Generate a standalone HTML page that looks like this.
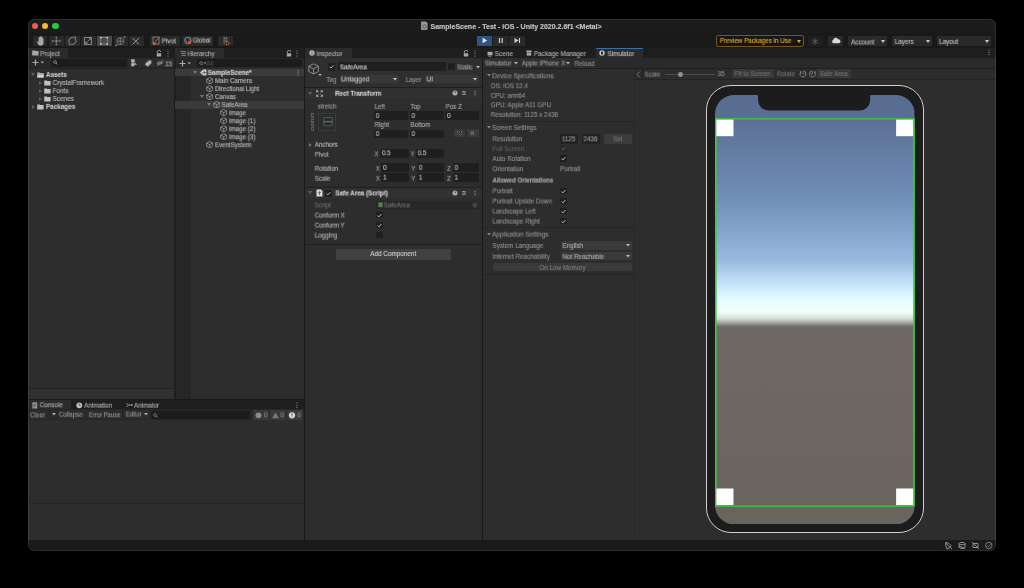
<!DOCTYPE html>
<html><head><meta charset="utf-8">
<style>
*{margin:0;padding:0;box-sizing:border-box}
html,body{width:1024px;height:588px;background:#000;overflow:hidden;font-family:"Liberation Sans",sans-serif;position:relative}
.a{position:absolute}
.t{position:absolute;white-space:nowrap;will-change:transform;transform-origin:0 0;-webkit-text-stroke:0.15px currentColor}
#root{position:absolute;left:0;top:0;width:1024px;height:588px}
</style></head><body><div id="root">
<div class="a" style="left:28px;top:19px;width:968px;height:531.5px;background:#191919;border-radius:6px"></div>
<div class="a" style="left:28px;top:19px;width:968px;height:14px;background:#1c1c1c;border-radius:6px 6px 0 0"></div>
<div class="a" style="left:32.0px;top:23.0px;width:6.40px;height:6.40px;background:#ee5e57;border-radius:3.2px;"></div>
<div class="a" style="left:42.099999999999994px;top:23.0px;width:6.40px;height:6.40px;background:#f8bb30;border-radius:3.2px;"></div>
<div class="a" style="left:52.199999999999996px;top:23.0px;width:6.40px;height:6.40px;background:#29c640;border-radius:3.2px;"></div>
<div class="t" style="left:430px;top:22px;font-size:7.00px;line-height:7.00px;color:#c2c2c2;transform:translate(0.50px,0.83px);font-weight:bold;">SampleScene - Test - iOS - Unity 2020.2.6f1 &lt;Metal&gt;</div>
<div class="a" style="left:421px;top:21.5px;width:6.40px;height:8.50px;background:#8a8a8a;border-radius:1px;"></div>
<div class="a" style="left:33px;top:36px;width:14.40px;height:9.70px;background:#2a2a2a;"></div>
<div class="a" style="left:48.9px;top:36px;width:14.90px;height:9.70px;background:#2a2a2a;"></div>
<div class="a" style="left:65.2px;top:36px;width:14.80px;height:9.70px;background:#2a2a2a;"></div>
<div class="a" style="left:81px;top:36px;width:15.00px;height:9.70px;background:#2a2a2a;"></div>
<div class="a" style="left:97.2px;top:36px;width:14.80px;height:9.70px;background:#2a2a2a;"></div>
<div class="a" style="left:113.5px;top:36px;width:14.50px;height:9.70px;background:#2a2a2a;"></div>
<div class="a" style="left:129px;top:36px;width:15.40px;height:9.70px;background:#2a2a2a;"></div>
<div class="a" style="left:97.2px;top:36px;width:14.80px;height:9.70px;background:#4a4a4a;"></div>
<div class="a" style="left:149.8px;top:36px;width:30.70px;height:9.70px;background:#2a2a2a;"></div>
<div class="a" style="left:182px;top:36px;width:31.00px;height:9.70px;background:#2a2a2a;"></div>
<div class="a" style="left:218px;top:36px;width:15.30px;height:9.70px;background:#2a2a2a;"></div>
<svg class="a" style="left:28px;top:33px" width="220" height="16" viewBox="0 0 220 16">
<g fill="#a8a8a8" stroke="none">
<path transform="translate(1.8 0)" d="M9.6 12.6 Q8.2 11.8 7.6 9.8 L7 8.3 Q7.6 7.9 8.2 8.6 L8.8 9.3 V4.4 Q9.3 3.9 9.8 4.4 V7.6 V3.8 Q10.3 3.3 10.8 3.8 V7.6 V3.6 Q11.3 3.1 11.8 3.6 V7.6 V4.1 Q12.3 3.6 12.8 4.1 V8.2 V5.6 Q13.3 5.2 13.7 5.6 V9.8 Q13.5 11.8 12.5 12.6 Z"/>
</g>
<g fill="#a0a0a0" stroke="#a0a0a0" stroke-width="0.6">
<path d="M28.3 4.5 V11.6 M24.6 8 H32" fill="none"/>
<path d="M28.3 3.6 l-1 1.2 h2z M28.3 12.5 l-1 -1.2 h2z M23.7 8 l1.2 -1 v2z M32.9 8 l-1.2 -1 v2z" stroke="none"/>
<circle cx="28.3" cy="8" r="0.6" stroke="none"/>
</g>
<g fill="none" stroke="#9a9a9a" stroke-width="0.8">
<circle cx="44.4" cy="7.9" r="3.5" stroke-dasharray="9.5 1.5" transform="rotate(-40 44.4 7.9)"/><path d="M46.2 3.6 l1.8 0.5 -0.6 1.7 M42.6 12.2 l-1.8 -0.5 0.6 -1.7" stroke-width="0.7"/></g>
<g fill="none" stroke="#9a9a9a" stroke-width="0.8">
<rect x="56.6" y="4.6" width="6.8" height="6.8"/><rect x="56.6" y="8.6" width="2.8" height="2.8" fill="#777" stroke="none"/><path d="M59.8 8.2 L62.8 5.2 M61 5 h1.9 v1.9" stroke-width="0.7"/>
</g>
<g fill="#c8c8c8">
<rect x="72.8" y="4.6" width="6.4" height="6.4" fill="none" stroke="#9a9a9a" stroke-width="0.6"/>
<rect x="72" y="3.8" width="1.6" height="1.6"/><rect x="78.4" y="3.8" width="1.6" height="1.6"/><rect x="72" y="10.2" width="1.6" height="1.6"/><rect x="78.4" y="10.2" width="1.6" height="1.6"/>
</g>
<g fill="none" stroke="#8e8e8e" stroke-width="0.7">
<circle cx="92.3" cy="8.2" r="3.4"/><path d="M92.3 4.8 V11.6 M88.9 8.2 H95.7"/>
<circle cx="96.5" cy="4" r="0.6" fill="#8e8e8e"/><circle cx="88.2" cy="12.3" r="0.6" fill="#8e8e8e"/>
</g>
<g fill="none" stroke="#9a9a9a" stroke-width="1">
<path d="M104.5 5 L111 11.5 M111 5 L104.5 11.5"/>
</g>
</svg>
<svg class="a" style="left:150px;top:35px" width="85" height="12" viewBox="0 0 85 12">
<rect x="3" y="2" width="6" height="7" fill="none" stroke="#9a9a9a" stroke-width="0.7"/><path d="M4 8 L9 2.6" stroke="#9a9a9a" stroke-width="0.7"/><circle cx="4.3" cy="8.6" r="1.5" fill="#d9582f"/>
<circle cx="37.8" cy="5.5" r="3.3" fill="none" stroke="#9a9a9a" stroke-width="0.8"/><path d="M35 4.4 Q37 5.4 36.8 8 M38.4 2.4 Q40 4.5 40.7 6.4" fill="none" stroke="#9a9a9a" stroke-width="0.6"/><circle cx="39.6" cy="7.4" r="1.6" fill="#d9582f"/>
<path d="M74.2 1.5 V9.5 M76.3 1.5 V9.5 M73.2 3.4 H77.8 M73.2 6 H77.8" stroke="#8a8a8a" stroke-width="0.6"/><path d="M76 6.6 h1.5 a1.5 1.5 0 0 1 0 3 h-1.5" fill="none" stroke="#d9582f" stroke-width="0.8"/>
</svg>
<div class="t" style="left:161px;top:38px;font-size:7.17px;line-height:7.17px;color:#bdbdbd;transform:translate(0.70px,0.35px) scaleX(0.8929);">Pivot</div>
<div class="t" style="left:192px;top:37px;font-size:6.83px;line-height:6.83px;color:#bdbdbd;transform:translate(0.70px,0.61px) scaleX(0.8929);">Global</div>
<div class="a" style="left:477.3px;top:36px;width:14.70px;height:9.80px;background:#2c5382;"></div>
<div class="a" style="left:493.1px;top:36px;width:15.00px;height:9.80px;background:#2a2a2a;"></div>
<div class="a" style="left:509px;top:36px;width:15.50px;height:9.80px;background:#2a2a2a;"></div>
<div class="a" style="left:715.8px;top:35.2px;width:88px;height:11.5px;border:0.8px solid #735817;border-radius:2px;background:#161616"></div>
<div class="t" style="left:719px;top:37px;font-size:7.08px;line-height:7.08px;color:#dca727;transform:translate(0.80px,0.89px) scaleX(0.8929);">Preview Packages in Use</div>
<div class="a" style="left:807.7px;top:36px;width:15.00px;height:9.70px;background:#202020;"></div>
<div class="a" style="left:827.9px;top:36px;width:14.90px;height:9.70px;background:#2a2a2a;"></div>
<div class="a" style="left:848.1px;top:36px;width:38.80px;height:9.50px;background:#2a2a2a;"></div>
<div class="a" style="left:892.3px;top:36px;width:39.60px;height:9.50px;background:#2a2a2a;"></div>
<div class="a" style="left:936.9px;top:36px;width:54.20px;height:9.50px;background:#2a2a2a;"></div>
<div class="t" style="left:851px;top:38px;font-size:7.25px;line-height:7.25px;color:#bdbdbd;transform:translate(0.00px,0.41px) scaleX(0.8929);">Account</div>
<div class="t" style="left:894px;top:37px;font-size:7.06px;line-height:7.06px;color:#bdbdbd;transform:translate(0.70px,0.90px) scaleX(0.8929);">Layers</div>
<div class="t" style="left:939px;top:37px;font-size:7.06px;line-height:7.06px;color:#bdbdbd;transform:translate(0.20px,0.90px) scaleX(0.8929);">Layout</div>
<div class="a" style="left:28px;top:48.2px;width:146.50px;height:340.30px;background:#1e1e1e;"></div>
<div class="a" style="left:28px;top:57.7px;width:146.50px;height:330.80px;background:#2d2d2d;"></div>
<div class="a" style="left:28px;top:48.2px;width:40.30px;height:9.50px;background:#2b2b2b;"></div>
<div class="t" style="left:40px;top:50px;font-size:7.02px;line-height:7.02px;color:#ababab;transform:translate(0.20px,0.12px) scaleX(0.8929);">Project</div>
<div class="a" style="left:28px;top:57.7px;width:146.50px;height:10.30px;background:#282828;"></div>
<div class="a" style="left:28px;top:67.8px;width:146.50px;height:0.80px;background:#242424;"></div>
<div class="a" style="left:51.1px;top:58.9px;width:75.80px;height:7.90px;background:#1c1c1c;border-radius:2px;"></div>
<div class="a" style="left:129px;top:58.5px;width:11.80px;height:8.50px;background:#2e2e2e;"></div>
<div class="a" style="left:142px;top:58.5px;width:12.00px;height:8.50px;background:#2e2e2e;"></div>
<div class="a" style="left:155.1px;top:58.5px;width:18.60px;height:8.50px;background:#2e2e2e;"></div>
<div class="t" style="left:45px;top:71px;font-size:7.13px;line-height:7.13px;color:#c8c8c8;transform:translate(0.90px,0.96px) scaleX(0.8929);font-weight:bold;">Assets</div>
<div class="t" style="left:52px;top:79px;font-size:7.11px;line-height:7.11px;color:#b4b4b4;transform:translate(0.60px,0.97px) scaleX(0.8929);">CrystalFramework</div>
<div class="t" style="left:52px;top:88px;font-size:7.11px;line-height:7.11px;color:#b4b4b4;transform:translate(0.60px,0.07px) scaleX(0.8929);">Fonts</div>
<div class="t" style="left:52px;top:95px;font-size:7.11px;line-height:7.11px;color:#b4b4b4;transform:translate(0.60px,0.97px) scaleX(0.8929);">Scenes</div>
<div class="t" style="left:45px;top:103px;font-size:7.13px;line-height:7.13px;color:#c8c8c8;transform:translate(0.90px,0.86px) scaleX(0.8929);font-weight:bold;">Packages</div>
<svg class="a" style="left:32px;top:50.20px" width="7" height="6" viewBox="0 0 7 6"><path d="M0.2 0.4 H2.6 L3.3 1.1 H6.6 V5.4 H0.2 Z" fill="#a8a8a8"/></svg>
<svg class="a" style="left:156.1px;top:49.70px" width="6" height="7" viewBox="0 0 6 7"><path d="M1.3 3.2 V2 a1.7 1.7 0 0 1 3.4 0" fill="none" stroke="#a8a8a8" stroke-width="0.8"/><rect x="0.8" y="3.3" width="4.4" height="3.2" fill="#a8a8a8"/></svg>
<svg class="a" style="left:167px;top:49.70px" width="2" height="7" viewBox="0 0 2 7"><circle cx="1" cy="1" r="0.6" fill="#a8a8a8"/><circle cx="1" cy="3.5" r="0.6" fill="#a8a8a8"/><circle cx="1" cy="6" r="0.6" fill="#a8a8a8"/></svg>
<svg class="a" style="left:31.5px;top:59.30px" width="13" height="7" viewBox="0 0 13 7"><path d="M3.5 0.5v6 M0.5 3.5h6" stroke="#a8a8a8" stroke-width="1.2"/><path d="M8.6 2.6h3.4l-1.7 2z" fill="#a8a8a8"/></svg>
<svg class="a" style="left:52.5px;top:60.30px" width="5" height="5" viewBox="0 0 5 5"><circle cx="2" cy="2" r="1.4" fill="none" stroke="#9a9a9a" stroke-width="0.7"/><path d="M3 3 L4.6 4.6" stroke="#9a9a9a" stroke-width="0.8"/></svg>
<svg class="a" style="left:129px;top:58px" width="45" height="10" viewBox="0 0 45 10"><rect x="2.2" y="1.3" width="3.4" height="3.2" rx="0.5" fill="#b4b4b4"/><circle cx="3.9" cy="6.6" r="1.9" fill="#b4b4b4"/><path d="M5.6 4 L8 7 L6 6.6z" fill="#b4b4b4"/><path d="M15.8 6.2 L19.6 2.6 H22.4 V5.2 L18.6 8.8 Z" fill="#b0b0b0"/><path d="M28.2 5 q2.6 -2.8 5.2 0 q-2.6 2.8 -5.2 0z" fill="none" stroke="#a0a0a0" stroke-width="0.8"/><path d="M28 7.8 L34.4 2.2" stroke="#a0a0a0" stroke-width="0.7"/></svg>
<div class="t" style="left:165px;top:60px;font-size:7.39px;line-height:7.39px;color:#a8a8a8;transform:translate(0.00px,0.24px) scaleX(0.8929);">15</div>
<svg class="a" style="left:31.2px;top:73.00px" width="4" height="3" viewBox="0 0 4 3"><path d="M0 0h4l-2 2.9z" fill="#5f5f5f"/></svg>
<svg class="a" style="left:37px;top:71.50px" width="7" height="6" viewBox="0 0 7 6"><path d="M0.2 0.4 H2.6 L3.3 1.1 H6.6 V5.4 H0.2 Z" fill="#c0c0c0"/><path d="M0.2 5.4 L1.4 2.2 H6.8 L6.6 5.4Z" fill="#d0d0d0"/><path d="M0.6 2 H6.4" stroke="#2d2d2d" stroke-width="0.4"/></svg>
<svg class="a" style="left:38.5px;top:80.60px" width="3" height="4" viewBox="0 0 3 4"><path d="M0 0v4l2.9-2z" fill="#5f5f5f"/></svg>
<svg class="a" style="left:44.1px;top:79.60px" width="7" height="6" viewBox="0 0 7 6"><path d="M0.2 0.4 H2.6 L3.3 1.1 H6.6 V5.4 H0.2 Z" fill="#c0c0c0"/></svg>
<svg class="a" style="left:38.5px;top:88.70px" width="3" height="4" viewBox="0 0 3 4"><path d="M0 0v4l2.9-2z" fill="#5f5f5f"/></svg>
<svg class="a" style="left:44.1px;top:87.70px" width="7" height="6" viewBox="0 0 7 6"><path d="M0.2 0.4 H2.6 L3.3 1.1 H6.6 V5.4 H0.2 Z" fill="#c0c0c0"/></svg>
<svg class="a" style="left:38.5px;top:96.60px" width="3" height="4" viewBox="0 0 3 4"><path d="M0 0v4l2.9-2z" fill="#5f5f5f"/></svg>
<svg class="a" style="left:44.1px;top:95.60px" width="7" height="6" viewBox="0 0 7 6"><path d="M0.2 0.4 H2.6 L3.3 1.1 H6.6 V5.4 H0.2 Z" fill="#c0c0c0"/></svg>
<svg class="a" style="left:31.5px;top:104.50px" width="3" height="4" viewBox="0 0 3 4"><path d="M0 0v4l2.9-2z" fill="#5f5f5f"/></svg>
<svg class="a" style="left:37px;top:103.50px" width="7" height="6" viewBox="0 0 7 6"><path d="M0.2 0.4 H2.6 L3.3 1.1 H6.6 V5.4 H0.2 Z" fill="#c0c0c0"/></svg>
<div class="a" style="left:28px;top:388.3px;width:146.30px;height:0.70px;background:#222222;"></div>
<div class="a" style="left:28px;top:389.3px;width:146.50px;height:9.40px;background:#303030;"></div>
<div class="a" style="left:175.2px;top:48.2px;width:128.60px;height:350.50px;background:#1e1e1e;"></div>
<div class="a" style="left:175.2px;top:57.7px;width:128.60px;height:341.00px;background:#2d2d2d;"></div>
<div class="a" style="left:175.2px;top:48.2px;width:48.60px;height:9.50px;background:#2b2b2b;"></div>
<div class="t" style="left:187px;top:50px;font-size:7.06px;line-height:7.06px;color:#ababab;transform:translate(0.50px,0.10px) scaleX(0.8929);">Hierarchy</div>
<div class="a" style="left:175.2px;top:57.7px;width:128.60px;height:10.80px;background:#282828;"></div>
<div class="a" style="left:197px;top:59.4px;width:105.40px;height:7.70px;background:#1c1c1c;border-radius:2px;"></div>
<div class="a" style="left:175.2px;top:76px;width:16.10px;height:322.70px;background:#262626;"></div>
<div class="a" style="left:174.1px;top:57.7px;width:1.80px;height:341.00px;background:#1e1e1e;"></div>
<div class="a" style="left:175.2px;top:68.9px;width:128.60px;height:7.10px;background:#3b3b3b;"></div>
<div class="t" style="left:207px;top:69px;font-size:7.11px;line-height:7.11px;color:#cfcfcf;transform:translate(0.70px,0.87px) scaleX(0.8929);font-weight:bold;">SampleScene*</div>
<div class="t" style="left:214px;top:78px;font-size:6.94px;line-height:6.94px;color:#b9b9b9;transform:translate(0.90px,0.05px) scaleX(0.8929);">Main Camera</div>
<div class="t" style="left:214px;top:86px;font-size:6.94px;line-height:6.94px;color:#b9b9b9;transform:translate(0.90px,0.07px) scaleX(0.8929);">Directional Light</div>
<div class="t" style="left:214px;top:94px;font-size:6.94px;line-height:6.94px;color:#b9b9b9;transform:translate(0.90px,0.09px) scaleX(0.8929);">Canvas</div>
<div class="a" style="left:175.2px;top:101px;width:128.60px;height:7.50px;background:#3a3a3a;"></div>
<div class="t" style="left:221px;top:102px;font-size:6.94px;line-height:6.94px;color:#b9b9b9;transform:translate(0.60px,0.11px) scaleX(0.8929);">SafeArea</div>
<div class="t" style="left:228px;top:110px;font-size:6.94px;line-height:6.94px;color:#b9b9b9;transform:translate(0.80px,0.13px) scaleX(0.8929);">Image</div>
<div class="t" style="left:228px;top:118px;font-size:6.94px;line-height:6.94px;color:#b9b9b9;transform:translate(0.80px,0.15px) scaleX(0.8929);">Image (1)</div>
<div class="t" style="left:228px;top:126px;font-size:6.94px;line-height:6.94px;color:#b9b9b9;transform:translate(0.80px,0.17px) scaleX(0.8929);">Image (2)</div>
<div class="t" style="left:228px;top:134px;font-size:6.94px;line-height:6.94px;color:#b9b9b9;transform:translate(0.80px,0.19px) scaleX(0.8929);">Image (3)</div>
<div class="t" style="left:214px;top:142px;font-size:6.94px;line-height:6.94px;color:#b9b9b9;transform:translate(0.90px,0.21px) scaleX(0.8929);">EventSystem</div>
<svg class="a" style="left:180px;top:50.5px" width="6" height="5" viewBox="0 0 6 5"><path d="M0.3 0.6h5.4 M1.5 2.5h4.2 M1.5 4.4h4.2" stroke="#a8a8a8" stroke-width="0.7"/></svg>
<svg class="a" style="left:286px;top:49.70px" width="6" height="7" viewBox="0 0 6 7"><path d="M1.3 3.2 V2 a1.7 1.7 0 0 1 3.4 0" fill="none" stroke="#a8a8a8" stroke-width="0.8"/><rect x="0.8" y="3.3" width="4.4" height="3.2" fill="#a8a8a8"/></svg>
<svg class="a" style="left:296.4px;top:49.70px" width="2" height="7" viewBox="0 0 2 7"><circle cx="1" cy="1" r="0.6" fill="#a8a8a8"/><circle cx="1" cy="3.5" r="0.6" fill="#a8a8a8"/><circle cx="1" cy="6" r="0.6" fill="#a8a8a8"/></svg>
<svg class="a" style="left:178.6px;top:59.50px" width="13" height="7" viewBox="0 0 13 7"><path d="M3.5 0.5v6 M0.5 3.5h6" stroke="#a8a8a8" stroke-width="1.2"/><path d="M8.6 2.6h3.4l-1.7 2z" fill="#a8a8a8"/></svg>
<svg class="a" style="left:198.5px;top:60.8px" width="8" height="5" viewBox="0 0 8 5"><circle cx="2" cy="2" r="1.4" fill="none" stroke="#8a8a8a" stroke-width="0.7"/><path d="M3 3 L4.5 4.5 M5 1.5 h2 l-1 1.3z" stroke="#8a8a8a" stroke-width="0.6" fill="#8a8a8a"/></svg>
<div class="t" style="left:206px;top:60px;font-size:6.94px;line-height:6.94px;color:#4e4e4e;transform:translate(0.50px,0.75px) scaleX(0.8929);">All</div>
<svg class="a" style="left:193px;top:71.10px" width="4" height="3" viewBox="0 0 4 3"><path d="M0 0h4l-2 2.9z" fill="#777"/></svg>
<svg class="a" style="left:198.5px;top:69px" width="8" height="7" viewBox="0 0 8 7"><path d="M1 3.5 L4.2 0.6 H7.4 V6.4 H4.2 Z" fill="#cfcfcf"/><path d="M3.2 3.5 H7.4 M5.2 1.6 V5.4" stroke="#3b3b3b" stroke-width="0.6"/></svg>
<svg class="a" style="left:296.5px;top:69.5px" width="2" height="6" viewBox="0 0 2 6"><circle cx="1" cy="0.8" r="0.55" fill="#aaa"/><circle cx="1" cy="3" r="0.55" fill="#aaa"/><circle cx="1" cy="5.2" r="0.55" fill="#aaa"/></svg>
<svg class="a" style="left:205.9px;top:76.90px" width="7.4" height="7.4" viewBox="0 0 7.4 7.4"><path d="M3.7 0.5 L6.7 2.1 V5.3 L3.7 6.9 L0.7 5.3 V2.1 Z M0.7 2.1 L3.7 3.7 L6.7 2.1 M3.7 3.7 V6.9" fill="none" stroke="#a8a8a8" stroke-width="0.7" stroke-linejoin="round"/></svg>
<svg class="a" style="left:205.9px;top:84.92px" width="7.4" height="7.4" viewBox="0 0 7.4 7.4"><path d="M3.7 0.5 L6.7 2.1 V5.3 L3.7 6.9 L0.7 5.3 V2.1 Z M0.7 2.1 L3.7 3.7 L6.7 2.1 M3.7 3.7 V6.9" fill="none" stroke="#a8a8a8" stroke-width="0.7" stroke-linejoin="round"/></svg>
<svg class="a" style="left:205.9px;top:92.94px" width="7.4" height="7.4" viewBox="0 0 7.4 7.4"><path d="M3.7 0.5 L6.7 2.1 V5.3 L3.7 6.9 L0.7 5.3 V2.1 Z M0.7 2.1 L3.7 3.7 L6.7 2.1 M3.7 3.7 V6.9" fill="none" stroke="#a8a8a8" stroke-width="0.7" stroke-linejoin="round"/></svg>
<svg class="a" style="left:200.2px;top:95.14px" width="4" height="3" viewBox="0 0 4 3"><path d="M0 0h4l-2 2.9z" fill="#777"/></svg>
<svg class="a" style="left:213px;top:100.96px" width="7.4" height="7.4" viewBox="0 0 7.4 7.4"><path d="M3.7 0.5 L6.7 2.1 V5.3 L3.7 6.9 L0.7 5.3 V2.1 Z M0.7 2.1 L3.7 3.7 L6.7 2.1 M3.7 3.7 V6.9" fill="none" stroke="#a8a8a8" stroke-width="0.7" stroke-linejoin="round"/></svg>
<svg class="a" style="left:207.4px;top:103.16px" width="4" height="3" viewBox="0 0 4 3"><path d="M0 0h4l-2 2.9z" fill="#777"/></svg>
<svg class="a" style="left:219.9px;top:108.98px" width="7.4" height="7.4" viewBox="0 0 7.4 7.4"><path d="M3.7 0.5 L6.7 2.1 V5.3 L3.7 6.9 L0.7 5.3 V2.1 Z M0.7 2.1 L3.7 3.7 L6.7 2.1 M3.7 3.7 V6.9" fill="none" stroke="#a8a8a8" stroke-width="0.7" stroke-linejoin="round"/></svg>
<svg class="a" style="left:219.9px;top:117.00px" width="7.4" height="7.4" viewBox="0 0 7.4 7.4"><path d="M3.7 0.5 L6.7 2.1 V5.3 L3.7 6.9 L0.7 5.3 V2.1 Z M0.7 2.1 L3.7 3.7 L6.7 2.1 M3.7 3.7 V6.9" fill="none" stroke="#a8a8a8" stroke-width="0.7" stroke-linejoin="round"/></svg>
<svg class="a" style="left:219.9px;top:125.02px" width="7.4" height="7.4" viewBox="0 0 7.4 7.4"><path d="M3.7 0.5 L6.7 2.1 V5.3 L3.7 6.9 L0.7 5.3 V2.1 Z M0.7 2.1 L3.7 3.7 L6.7 2.1 M3.7 3.7 V6.9" fill="none" stroke="#a8a8a8" stroke-width="0.7" stroke-linejoin="round"/></svg>
<svg class="a" style="left:219.9px;top:133.04px" width="7.4" height="7.4" viewBox="0 0 7.4 7.4"><path d="M3.7 0.5 L6.7 2.1 V5.3 L3.7 6.9 L0.7 5.3 V2.1 Z M0.7 2.1 L3.7 3.7 L6.7 2.1 M3.7 3.7 V6.9" fill="none" stroke="#a8a8a8" stroke-width="0.7" stroke-linejoin="round"/></svg>
<svg class="a" style="left:205.9px;top:141.06px" width="7.4" height="7.4" viewBox="0 0 7.4 7.4"><path d="M3.7 0.5 L6.7 2.1 V5.3 L3.7 6.9 L0.7 5.3 V2.1 Z M0.7 2.1 L3.7 3.7 L6.7 2.1 M3.7 3.7 V6.9" fill="none" stroke="#a8a8a8" stroke-width="0.7" stroke-linejoin="round"/></svg>
<div class="a" style="left:304.6px;top:48.2px;width:177.40px;height:491.60px;background:#1e1e1e;"></div>
<div class="a" style="left:304.6px;top:57.7px;width:177.40px;height:482.10px;background:#2d2d2d;"></div>
<div class="a" style="left:304.6px;top:48.2px;width:47.10px;height:9.50px;background:#2b2b2b;"></div>
<div class="t" style="left:316px;top:50px;font-size:7.06px;line-height:7.06px;color:#ababab;transform:translate(0.50px,0.10px) scaleX(0.8929);">Inspector</div>
<div class="a" style="left:483.0px;top:48.2px;width:513.00px;height:491.60px;background:#1e1e1e;"></div>
<div class="a" style="left:483.0px;top:57.7px;width:513.00px;height:482.10px;background:#2d2d2d;"></div>
<div class="a" style="left:595.6px;top:48.2px;width:47.00px;height:9.50px;background:#2b2b2b;"></div>
<div class="a" style="left:595.6px;top:48.2px;width:47.00px;height:0.80px;background:#3d6ea3;"></div>
<div class="t" style="left:494px;top:50px;font-size:7.19px;line-height:7.19px;color:#ababab;transform:translate(0.70px,0.03px) scaleX(0.8929);">Scene</div>
<div class="t" style="left:533px;top:50px;font-size:7.20px;line-height:7.20px;color:#ababab;transform:translate(0.80px,0.03px) scaleX(0.8929);">Package Manager</div>
<div class="t" style="left:607px;top:50px;font-size:7.06px;line-height:7.06px;color:#bdbdbd;transform:translate(0.50px,0.10px) scaleX(0.8929);">Simulator</div>
<div class="a" style="left:28px;top:399.6px;width:276.00px;height:140.20px;background:#1e1e1e;"></div>
<div class="a" style="left:28px;top:409.1px;width:276.00px;height:130.70px;background:#2d2d2d;"></div>
<div class="a" style="left:28px;top:399.6px;width:43.10px;height:9.80px;background:#2b2b2b;"></div>
<div class="t" style="left:39px;top:402px;font-size:7.08px;line-height:7.08px;color:#ababab;transform:translate(0.70px,0.19px) scaleX(0.8929);">Console</div>
<div class="t" style="left:84px;top:401px;font-size:7.06px;line-height:7.06px;color:#ababab;transform:translate(0.10px,0.70px) scaleX(0.8929);">Animation</div>
<div class="t" style="left:134px;top:401px;font-size:7.06px;line-height:7.06px;color:#ababab;transform:translate(0.00px,0.70px) scaleX(0.8929);">Animator</div>
<div class="a" style="left:304.6px;top:57.7px;width:177.40px;height:29.60px;background:#2f2f2f;"></div>
<div class="a" style="left:304.6px;top:87.3px;width:177.40px;height:0.60px;background:#1f1f1f;"></div>
<div class="a" style="left:304.6px;top:87.9px;width:177.40px;height:10.50px;background:#313131;"></div>
<svg class="a" style="left:308px;top:62.5px" width="14" height="14" viewBox="0 0 14 14"><path d="M5.6 0.8 L10.4 3.3 V8.5 L5.6 11 L0.8 8.5 V3.3 Z M0.8 3.3 L5.6 5.8 L10.4 3.3 M5.6 5.8 V11" fill="none" stroke="#9a9a9a" stroke-width="0.85" stroke-linejoin="round"/><path d="M10.3 11 h3.4 l-1.7 1.9z" fill="#b8b8b8"/></svg>
<div class="a" style="left:328px;top:63.2px;width:7.00px;height:7.40px;background:#1f1f1f;border-radius:1.2px;"></div>
<svg class="a" style="left:328px;top:63.2px" width="7" height="7.4" viewBox="0 0 7 7.4"><path d="M1.6 3.8 L2.9 5.1 L5.5 2.3" fill="none" stroke="#d0d0d0" stroke-width="0.9"/></svg>
<div class="a" style="left:338px;top:62.2px;width:108.10px;height:9.30px;background:#1f1f1f;border-radius:1.5px;"></div>
<div class="t" style="left:339px;top:63px;font-size:7.30px;line-height:7.30px;color:#d2d2d2;transform:translate(0.80px,0.38px) scaleX(0.8929);">SafeArea</div>
<div class="a" style="left:448.2px;top:63px;width:6.40px;height:7.40px;background:#1f1f1f;border-radius:1px;"></div>
<div class="t" style="left:457px;top:63px;font-size:7.06px;line-height:7.06px;color:#a0a0a0;transform:translate(0.00px,0.50px) scaleX(0.8929);">Static</div>
<svg class="a" style="left:475.5px;top:65.5px" width="4" height="3" viewBox="0 0 4 3"><path d="M0 0h4l-2 2.4z" fill="#b0b0b0"/></svg>
<div class="t" style="left:326px;top:75px;font-size:7.06px;line-height:7.06px;color:#8f8f8f;transform:translate(0.30px,1.00px) scaleX(0.8929);">Tag</div>
<div class="a" style="left:339.8px;top:75px;width:58.90px;height:7.90px;background:#383838;border-radius:1.5px;"></div>
<div class="t" style="left:341px;top:75px;font-size:7.26px;line-height:7.26px;color:#c0c0c0;transform:translate(0.00px,0.50px) scaleX(0.8929);">Untagged</div>
<svg class="a" style="left:393px;top:77.8px" width="4" height="3" viewBox="0 0 4 3"><path d="M0 0h4l-2 2.4z" fill="#c0c0c0"/></svg>
<div class="t" style="left:405px;top:75px;font-size:7.06px;line-height:7.06px;color:#8f8f8f;transform:translate(0.70px,1.00px) scaleX(0.8929);">Layer</div>
<div class="a" style="left:425px;top:75px;width:53.70px;height:7.90px;background:#383838;border-radius:1.5px;"></div>
<div class="t" style="left:426px;top:75px;font-size:7.26px;line-height:7.26px;color:#c0c0c0;transform:translate(0.50px,0.50px) scaleX(0.8929);">UI</div>
<svg class="a" style="left:472.5px;top:77.8px" width="4" height="3" viewBox="0 0 4 3"><path d="M0 0h4l-2 2.4z" fill="#c0c0c0"/></svg>
<svg class="a" style="left:308px;top:91.55px" width="4.5" height="3.5" viewBox="0 0 4.5 3.5"><path d="M0 0h4.4l-2.2 3.2z" fill="#5c5c5c"/></svg>
<div class="t" style="left:335px;top:89px;font-size:7.06px;line-height:7.06px;color:#cfcfcf;transform:translate(0.00px,0.75px) scaleX(0.8929);font-weight:bold;">Rect Transform</div>
<svg class="a" style="left:452px;top:90.15px" width="28" height="6" viewBox="0 0 28 6"><circle cx="3" cy="3" r="2.5" fill="#b0b0b0"/><path d="M2.2 2.2 q0.8 -1 1.6 0 q0 0.8 -0.8 1.1" stroke="#2f2f2f" stroke-width="0.7" fill="none"/><path d="M10 1.5h4 M10 3h4 M10 4.5h4 M11.5 1v1 M12.5 2.5v1 M11 4v1" stroke="#b0b0b0" stroke-width="0.6"/><circle cx="23" cy="1.2" r="0.55" fill="#b0b0b0"/><circle cx="23" cy="3" r="0.55" fill="#b0b0b0"/><circle cx="23" cy="4.8" r="0.55" fill="#b0b0b0"/></svg>
<svg class="a" style="left:315.5px;top:89.8px" width="7" height="7" viewBox="0 0 7 7"><g fill="#c0c0c0"><path d="M0.3 0.3 h2.4 L0.3 2.7z M6.7 0.3 h-2.4 L6.7 2.7z M0.3 6.7 h2.4 L0.3 4.3z M6.7 6.7 h-2.4 L6.7 4.3z"/></g><path d="M1.2 1.2 L2.6 2.6 M5.8 1.2 L4.4 2.6 M1.2 5.8 L2.6 4.4 M5.8 5.8 L4.4 4.4" stroke="#c0c0c0" stroke-width="0.7"/></svg>
<div class="t" style="left:317px;top:103px;font-size:6.61px;line-height:6.61px;color:#a0a0a0;transform:translate(0.80px,0.61px) scaleX(0.8929);letter-spacing:0.12px">stretch</div>
<svg class="a" style="left:309px;top:111px" width="8" height="22" viewBox="0 0 8 22"><text x="0" y="0" transform="translate(5.2 19.8) rotate(-90)" font-family="Liberation Sans" font-size="5.7" fill="#8a8a8a">custom</text></svg>
<div class="a" style="left:318.2px;top:112.8px;width:17.8px;height:17.9px;border:0.7px solid #3a3a3a"></div>
<svg class="a" style="left:322.5px;top:117px" width="10" height="9.5" viewBox="0 0 10 9.5"><rect x="0.75" y="0.65" width="8.6" height="8.2" fill="none" stroke="#5e5e5e" stroke-width="0.7"/><path d="M1.2 4.7 H8.9" stroke="#2d9bd2" stroke-width="0.9"/><path d="M1.1 3.7 L2.4 4.7 L1.1 5.7z M9 3.7 L7.7 4.7 L9 5.7z" fill="#2d9bd2"/></svg>
<div class="t" style="left:374px;top:103px;font-size:6.94px;line-height:6.94px;color:#a8a8a8;transform:translate(0.60px,0.85px) scaleX(0.8929);">Left</div>
<div class="t" style="left:410px;top:103px;font-size:6.94px;line-height:6.94px;color:#a8a8a8;transform:translate(0.50px,0.85px) scaleX(0.8929);">Top</div>
<div class="t" style="left:445px;top:103px;font-size:6.94px;line-height:6.94px;color:#a8a8a8;transform:translate(0.60px,0.85px) scaleX(0.8929);">Pos Z</div>
<div class="a" style="left:374px;top:111.4px;width:34.30px;height:8.40px;background:#1f1f1f;border-radius:1.5px;"></div>
<div class="t" style="left:375px;top:112px;font-size:6.94px;line-height:6.94px;color:#c0c0c0;transform:translate(0.80px,0.95px) scaleX(0.8929);">0</div>
<div class="a" style="left:409.8px;top:111.4px;width:34.20px;height:8.40px;background:#1f1f1f;border-radius:1.5px;"></div>
<div class="t" style="left:411px;top:112px;font-size:6.94px;line-height:6.94px;color:#c0c0c0;transform:translate(0.60px,0.95px) scaleX(0.8929);">0</div>
<div class="a" style="left:445.3px;top:111.4px;width:34.20px;height:8.40px;background:#1f1f1f;border-radius:1.5px;"></div>
<div class="t" style="left:447px;top:112px;font-size:6.94px;line-height:6.94px;color:#c0c0c0;transform:translate(0.10px,0.95px) scaleX(0.8929);">0</div>
<div class="t" style="left:374px;top:121px;font-size:6.94px;line-height:6.94px;color:#a8a8a8;transform:translate(0.60px,0.95px) scaleX(0.8929);">Right</div>
<div class="t" style="left:410px;top:121px;font-size:6.94px;line-height:6.94px;color:#a8a8a8;transform:translate(0.50px,0.95px) scaleX(0.8929);">Bottom</div>
<div class="a" style="left:374px;top:129.5px;width:34.30px;height:8.30px;background:#1f1f1f;border-radius:1.5px;"></div>
<div class="t" style="left:375px;top:131px;font-size:6.94px;line-height:6.94px;color:#c0c0c0;transform:translate(0.80px,0.05px) scaleX(0.8929);">0</div>
<div class="a" style="left:409.8px;top:129.5px;width:34.20px;height:8.30px;background:#1f1f1f;border-radius:1.5px;"></div>
<div class="t" style="left:411px;top:131px;font-size:6.94px;line-height:6.94px;color:#c0c0c0;transform:translate(0.60px,0.05px) scaleX(0.8929);">0</div>
<div class="a" style="left:454px;top:128.6px;width:11.10px;height:8.80px;background:#3a3a3a;border-radius:1px;"></div>
<div class="a" style="left:466.7px;top:128.6px;width:12.00px;height:8.80px;background:#3a3a3a;border-radius:1px;"></div>
<div class="a" style="left:457px;top:130.6px;width:5px;height:4.8px;border:0.6px dotted #666"></div>
<div class="t" style="left:470px;top:130px;font-size:6.16px;line-height:6.16px;color:#8a8a8a;transform:translate(0.50px,0.23px) scaleX(0.8929);">R</div>
<svg class="a" style="left:309px;top:142.5px" width="3" height="4" viewBox="0 0 3 4"><path d="M0 0v4l2.8-2z" fill="#777"/></svg>
<div class="t" style="left:314px;top:140px;font-size:7.06px;line-height:7.06px;color:#b9b9b9;transform:translate(0.70px,0.80px) scaleX(0.8929);">Anchors</div>
<div class="t" style="left:314px;top:150px;font-size:7.06px;line-height:7.06px;color:#b0b0b0;transform:translate(0.70px,0.80px) scaleX(0.8929);">Pivot</div>
<div class="t" style="left:374px;top:151px;font-size:6.50px;line-height:6.50px;color:#a0a0a0;transform:translate(0.50px,0.27px) scaleX(0.8929);">X</div>
<div class="a" style="left:379.9px;top:149.2px;width:28.80px;height:8.70px;background:#1f1f1f;border-radius:1.5px;"></div>
<div class="t" style="left:382px;top:150px;font-size:6.94px;line-height:6.94px;color:#c0c0c0;transform:translate(0.00px,0.25px) scaleX(0.8929);">0.5</div>
<div class="t" style="left:410px;top:151px;font-size:6.50px;line-height:6.50px;color:#a0a0a0;transform:translate(0.60px,0.27px) scaleX(0.8929);">Y</div>
<div class="a" style="left:416px;top:149.2px;width:28.10px;height:8.70px;background:#1f1f1f;border-radius:1.5px;"></div>
<div class="t" style="left:417px;top:150px;font-size:6.94px;line-height:6.94px;color:#c0c0c0;transform:translate(0.80px,0.25px) scaleX(0.8929);">0.5</div>
<div class="t" style="left:314px;top:164px;font-size:7.06px;line-height:7.06px;color:#b0b0b0;transform:translate(0.70px,0.80px) scaleX(0.8929);">Rotation</div>
<div class="t" style="left:375px;top:165px;font-size:6.50px;line-height:6.50px;color:#a0a0a0;transform:translate(0.90px,0.87px) scaleX(0.8929);">X</div>
<div class="a" style="left:381.3px;top:163px;width:27.40px;height:8.60px;background:#1f1f1f;border-radius:1.5px;"></div>
<div class="t" style="left:383px;top:164px;font-size:6.94px;line-height:6.94px;color:#c0c0c0;transform:translate(0.10px,0.85px) scaleX(0.8929);">0</div>
<div class="t" style="left:411px;top:165px;font-size:6.50px;line-height:6.50px;color:#a0a0a0;transform:translate(0.40px,0.87px) scaleX(0.8929);">Y</div>
<div class="a" style="left:417px;top:163px;width:27.00px;height:8.60px;background:#1f1f1f;border-radius:1.5px;"></div>
<div class="t" style="left:418px;top:164px;font-size:6.94px;line-height:6.94px;color:#c0c0c0;transform:translate(0.80px,0.85px) scaleX(0.8929);">0</div>
<div class="t" style="left:447px;top:165px;font-size:6.50px;line-height:6.50px;color:#a0a0a0;transform:translate(0.10px,0.87px) scaleX(0.8929);">Z</div>
<div class="a" style="left:452.7px;top:163px;width:26.30px;height:8.60px;background:#1f1f1f;border-radius:1.5px;"></div>
<div class="t" style="left:454px;top:164px;font-size:6.94px;line-height:6.94px;color:#c0c0c0;transform:translate(0.60px,0.85px) scaleX(0.8929);">0</div>
<div class="t" style="left:314px;top:174px;font-size:7.06px;line-height:7.06px;color:#b0b0b0;transform:translate(0.70px,0.70px) scaleX(0.8929);">Scale</div>
<div class="t" style="left:375px;top:175px;font-size:6.50px;line-height:6.50px;color:#a0a0a0;transform:translate(0.90px,0.77px) scaleX(0.8929);">X</div>
<div class="a" style="left:381.3px;top:173.1px;width:27.40px;height:8.90px;background:#1f1f1f;border-radius:1.5px;"></div>
<div class="t" style="left:383px;top:174px;font-size:6.94px;line-height:6.94px;color:#c0c0c0;transform:translate(0.10px,0.75px) scaleX(0.8929);">1</div>
<div class="t" style="left:411px;top:175px;font-size:6.50px;line-height:6.50px;color:#a0a0a0;transform:translate(0.40px,0.77px) scaleX(0.8929);">Y</div>
<div class="a" style="left:417px;top:173.1px;width:27.00px;height:8.90px;background:#1f1f1f;border-radius:1.5px;"></div>
<div class="t" style="left:418px;top:174px;font-size:6.94px;line-height:6.94px;color:#c0c0c0;transform:translate(0.80px,0.75px) scaleX(0.8929);">1</div>
<div class="t" style="left:447px;top:175px;font-size:6.50px;line-height:6.50px;color:#a0a0a0;transform:translate(0.10px,0.77px) scaleX(0.8929);">Z</div>
<div class="a" style="left:452.7px;top:173.1px;width:26.30px;height:8.90px;background:#1f1f1f;border-radius:1.5px;"></div>
<div class="t" style="left:454px;top:174px;font-size:6.94px;line-height:6.94px;color:#c0c0c0;transform:translate(0.60px,0.75px) scaleX(0.8929);">1</div>
<div class="a" style="left:304.6px;top:186.8px;width:177.40px;height:0.70px;background:#1f1f1f;"></div>
<div class="a" style="left:304.6px;top:187.5px;width:177.40px;height:10.60px;background:#313131;"></div>
<svg class="a" style="left:308px;top:191.20px" width="4.5" height="3.5" viewBox="0 0 4.5 3.5"><path d="M0 0h4.4l-2.2 3.2z" fill="#5c5c5c"/></svg>
<div class="t" style="left:335px;top:189px;font-size:7.06px;line-height:7.06px;color:#cfcfcf;transform:translate(0.40px,0.40px) scaleX(0.8929);font-weight:bold;">Safe Area (Script)</div>
<svg class="a" style="left:452px;top:189.80px" width="28" height="6" viewBox="0 0 28 6"><circle cx="3" cy="3" r="2.5" fill="#b0b0b0"/><path d="M2.2 2.2 q0.8 -1 1.6 0 q0 0.8 -0.8 1.1" stroke="#2f2f2f" stroke-width="0.7" fill="none"/><path d="M10 1.5h4 M10 3h4 M10 4.5h4 M11.5 1v1 M12.5 2.5v1 M11 4v1" stroke="#b0b0b0" stroke-width="0.6"/><circle cx="23" cy="1.2" r="0.55" fill="#b0b0b0"/><circle cx="23" cy="3" r="0.55" fill="#b0b0b0"/><circle cx="23" cy="4.8" r="0.55" fill="#b0b0b0"/></svg>
<svg class="a" style="left:315.8px;top:188.8px" width="7" height="8" viewBox="0 0 7 8"><path d="M0.5 0.5h4.5l1.5 1.5v5.5h-6z" fill="#d8d8d8"/><path d="M3.5 2l-1.7 2h1.2v2h1v-2h1.2z" fill="#3d8a4a"/></svg>
<div class="a" style="left:325.2px;top:190.3px;width:6.70px;height:6.70px;background:#1f1f1f;border-radius:1.2px;"></div>
<svg class="a" style="left:325.2px;top:190.3px" width="7" height="7" viewBox="0 0 7 7"><path d="M1.5 3.6 L2.8 4.9 L5.4 2.1" fill="none" stroke="#d0d0d0" stroke-width="0.9"/></svg>
<div class="t" style="left:314px;top:201px;font-size:7.06px;line-height:7.06px;color:#6a6a6a;transform:translate(0.70px,0.40px) scaleX(0.8929);">Script</div>
<div class="a" style="left:375.8px;top:201px;width:103.70px;height:7.70px;background:#272727;border-radius:1.5px;"></div>
<svg class="a" style="left:377.5px;top:202.3px" width="5" height="5.5" viewBox="0 0 5 5.5"><rect x="0.3" y="0.3" width="4.4" height="4.9" fill="#5a7a5e"/></svg>
<div class="t" style="left:383px;top:201px;font-size:7.06px;line-height:7.06px;color:#6f6f6f;transform:translate(0.70px,0.40px) scaleX(0.8929);">SafeArea</div>
<svg class="a" style="left:471.5px;top:201.8px" width="6" height="6" viewBox="0 0 6 6"><circle cx="3" cy="3" r="2.3" fill="none" stroke="#666" stroke-width="0.6"/><circle cx="3" cy="3" r="1" fill="#666"/></svg>
<div class="t" style="left:314px;top:211px;font-size:7.06px;line-height:7.06px;color:#b0b0b0;transform:translate(0.70px,0.60px) scaleX(0.8929);">Conform X</div>
<div class="a" style="left:375.5px;top:211.7px;width:7.00px;height:6.80px;background:#1f1f1f;border-radius:1.2px;"></div>
<svg class="a" style="left:375.5px;top:211.70px" width="7" height="7" viewBox="0 0 7 7"><path d="M1.5 3.6 L2.8 4.9 L5.4 2.1" fill="none" stroke="#d8d8d8" stroke-width="0.9"/></svg>
<div class="t" style="left:314px;top:221px;font-size:7.06px;line-height:7.06px;color:#b0b0b0;transform:translate(0.70px,0.60px) scaleX(0.8929);">Conform Y</div>
<div class="a" style="left:375.5px;top:221.7px;width:7.00px;height:6.80px;background:#1f1f1f;border-radius:1.2px;"></div>
<svg class="a" style="left:375.5px;top:221.70px" width="7" height="7" viewBox="0 0 7 7"><path d="M1.5 3.6 L2.8 4.9 L5.4 2.1" fill="none" stroke="#d8d8d8" stroke-width="0.9"/></svg>
<div class="t" style="left:314px;top:231px;font-size:7.06px;line-height:7.06px;color:#b0b0b0;transform:translate(0.70px,0.60px) scaleX(0.8929);">Logging</div>
<div class="a" style="left:375.5px;top:231.7px;width:7.00px;height:6.80px;background:#1f1f1f;border-radius:1.2px;"></div>
<div class="a" style="left:304.6px;top:243.6px;width:177.40px;height:0.70px;background:#1f1f1f;"></div>
<div class="a" style="left:336px;top:249px;width:114.50px;height:10.50px;background:#414141;border-radius:1.5px;"></div>
<div class="t" style="left:336px;top:250.7px;width:114.5px;text-align:center;font-size:6.35px;line-height:6.35px;color:#c4c4c4">Add Component</div>
<div class="a" style="left:483.0px;top:57.7px;width:513.00px;height:10.70px;background:#2a2a2a;"></div>
<div class="a" style="left:483px;top:58.3px;width:35.80px;height:9.50px;background:#2f2f2f;"></div>
<div class="a" style="left:520.2px;top:58.3px;width:51.30px;height:9.50px;background:#2f2f2f;"></div>
<div class="a" style="left:572.9px;top:58.3px;width:23.30px;height:9.50px;background:#2f2f2f;"></div>
<div class="t" style="left:484px;top:59px;font-size:7.06px;line-height:7.06px;color:#9a9a9a;transform:translate(0.80px,0.50px) scaleX(0.8929);">Simulator</div>
<svg class="a" style="left:513.5px;top:61.8px" width="4" height="3" viewBox="0 0 4 3"><path d="M0 0h4l-2 2.4z" fill="#b0b0b0"/></svg>
<div class="t" style="left:521px;top:59px;font-size:7.06px;line-height:7.06px;color:#9a9a9a;transform:translate(0.80px,0.50px) scaleX(0.8929);">Apple iPhone X</div>
<svg class="a" style="left:566px;top:61.8px" width="4" height="3" viewBox="0 0 4 3"><path d="M0 0h4l-2 2.4z" fill="#b0b0b0"/></svg>
<div class="t" style="left:574px;top:59px;font-size:7.06px;line-height:7.06px;color:#8a8a8a;transform:translate(0.50px,0.90px) scaleX(0.8929);">Reload</div>
<div class="a" style="left:483.0px;top:68.4px;width:513.00px;height:0.50px;background:#1f1f1f;"></div>
<div class="a" style="left:633.8px;top:68.9px;width:0.70px;height:470.90px;background:#282828;"></div>
<svg class="a" style="left:486.5px;top:74.10px" width="4" height="3" viewBox="0 0 4 3"><path d="M0 0h4l-2 2.6z" fill="#888"/></svg>
<div class="t" style="left:492px;top:72px;font-size:7.27px;line-height:7.27px;color:#8e8e8e;transform:translate(0.00px,0.25px) scaleX(0.8929);">Device Specifications</div>
<div class="t" style="left:490px;top:82px;font-size:7.06px;line-height:7.06px;color:#8e8e8e;transform:translate(0.75px,0.20px) scaleX(0.8929);">OS: iOS 12.4</div>
<div class="t" style="left:490px;top:91px;font-size:7.06px;line-height:7.06px;color:#8e8e8e;transform:translate(0.75px,0.90px) scaleX(0.8929);">CPU: arm64</div>
<div class="t" style="left:490px;top:101px;font-size:7.06px;line-height:7.06px;color:#8e8e8e;transform:translate(0.75px,0.25px) scaleX(0.8929);">GPU: Apple A11 GPU</div>
<div class="t" style="left:490px;top:110px;font-size:7.06px;line-height:7.06px;color:#8e8e8e;transform:translate(0.75px,0.90px) scaleX(0.8929);">Resolution: 1125 x 2436</div>
<div class="a" style="left:483.0px;top:120.5px;width:150.70px;height:0.60px;background:#262626;"></div>
<svg class="a" style="left:486.5px;top:125.70px" width="4" height="3" viewBox="0 0 4 3"><path d="M0 0h4l-2 2.6z" fill="#888"/></svg>
<div class="t" style="left:492px;top:123px;font-size:7.06px;line-height:7.06px;color:#8e8e8e;transform:translate(0.00px,0.90px) scaleX(0.8929);">Screen Settings</div>
<div class="t" style="left:492px;top:135px;font-size:7.06px;line-height:7.06px;color:#8e8e8e;transform:translate(0.50px,0.25px) scaleX(0.8929);">Resolution</div>
<div class="a" style="left:560px;top:133.6px;width:18.30px;height:10.20px;background:#222222;border-radius:1.5px;"></div>
<div class="t" style="left:561px;top:135px;font-size:7.06px;line-height:7.06px;color:#9c9c9c;transform:translate(0.80px,0.30px) scaleX(0.8929);">1125</div>
<div class="a" style="left:581.7px;top:133.6px;width:18.30px;height:10.20px;background:#222222;border-radius:1.5px;"></div>
<div class="t" style="left:583px;top:135px;font-size:7.06px;line-height:7.06px;color:#9c9c9c;transform:translate(0.50px,0.30px) scaleX(0.8929);">2436</div>
<div class="a" style="left:603.8px;top:133.6px;width:28.10px;height:10.20px;background:#3c3c3c;border-radius:1.5px;"></div>
<div class="t" style="left:613px;top:135px;font-size:7.06px;line-height:7.06px;color:#777;transform:translate(0.00px,0.30px) scaleX(0.8929);">Set</div>
<div class="t" style="left:492px;top:145px;font-size:7.06px;line-height:7.06px;color:#5e5e5e;transform:translate(0.50px,0.10px) scaleX(0.8929);">Full Screen</div>
<div class="a" style="left:560px;top:145.3px;width:6.70px;height:6.60px;background:#282828;border-radius:1.2px;"></div>
<svg class="a" style="left:560px;top:145.30px" width="7" height="7" viewBox="0 0 7 7"><path d="M1.5 3.6 L2.8 4.9 L5.4 2.1" fill="none" stroke="#666" stroke-width="0.9"/></svg>
<div class="t" style="left:492px;top:154px;font-size:7.06px;line-height:7.06px;color:#8e8e8e;transform:translate(0.50px,1.00px) scaleX(0.8929);">Auto Rotation</div>
<div class="a" style="left:560px;top:155.20000000000002px;width:6.70px;height:6.60px;background:#1f1f1f;border-radius:1.2px;"></div>
<svg class="a" style="left:560px;top:155.20px" width="7" height="7" viewBox="0 0 7 7"><path d="M1.5 3.6 L2.8 4.9 L5.4 2.1" fill="none" stroke="#d8d8d8" stroke-width="0.9"/></svg>
<div class="t" style="left:492px;top:165px;font-size:7.06px;line-height:7.06px;color:#8e8e8e;transform:translate(0.50px,0.20px) scaleX(0.8929);">Orientation</div>
<div class="t" style="left:560px;top:165px;font-size:7.06px;line-height:7.06px;color:#8e8e8e;transform:translate(0.00px,0.20px) scaleX(0.8929);">Portrait</div>
<div class="t" style="left:492px;top:177px;font-size:6.81px;line-height:6.81px;color:#a8a8a8;transform:translate(0.50px,0.52px) scaleX(0.8929);font-weight:bold;">Allowed Orientations</div>
<div class="t" style="left:492px;top:187px;font-size:7.06px;line-height:7.06px;color:#8e8e8e;transform:translate(0.50px,0.30px) scaleX(0.8929);">Portrait</div>
<div class="a" style="left:560px;top:187.5px;width:6.70px;height:6.60px;background:#1f1f1f;border-radius:1.2px;"></div>
<svg class="a" style="left:560px;top:187.50px" width="7" height="7" viewBox="0 0 7 7"><path d="M1.5 3.6 L2.8 4.9 L5.4 2.1" fill="none" stroke="#d8d8d8" stroke-width="0.9"/></svg>
<div class="t" style="left:492px;top:197px;font-size:7.06px;line-height:7.06px;color:#8e8e8e;transform:translate(0.50px,0.50px) scaleX(0.8929);">Portrait Upside Down</div>
<div class="a" style="left:560px;top:197.70000000000002px;width:6.70px;height:6.60px;background:#1f1f1f;border-radius:1.2px;"></div>
<svg class="a" style="left:560px;top:197.70px" width="7" height="7" viewBox="0 0 7 7"><path d="M1.5 3.6 L2.8 4.9 L5.4 2.1" fill="none" stroke="#d8d8d8" stroke-width="0.9"/></svg>
<div class="t" style="left:492px;top:207px;font-size:7.06px;line-height:7.06px;color:#8e8e8e;transform:translate(0.50px,0.60px) scaleX(0.8929);">Landscape Left</div>
<div class="a" style="left:560px;top:207.8px;width:6.70px;height:6.60px;background:#1f1f1f;border-radius:1.2px;"></div>
<svg class="a" style="left:560px;top:207.80px" width="7" height="7" viewBox="0 0 7 7"><path d="M1.5 3.6 L2.8 4.9 L5.4 2.1" fill="none" stroke="#d8d8d8" stroke-width="0.9"/></svg>
<div class="t" style="left:492px;top:217px;font-size:7.06px;line-height:7.06px;color:#8e8e8e;transform:translate(0.50px,0.60px) scaleX(0.8929);">Landscape Right</div>
<div class="a" style="left:560px;top:217.8px;width:6.70px;height:6.60px;background:#1f1f1f;border-radius:1.2px;"></div>
<svg class="a" style="left:560px;top:217.80px" width="7" height="7" viewBox="0 0 7 7"><path d="M1.5 3.6 L2.8 4.9 L5.4 2.1" fill="none" stroke="#d8d8d8" stroke-width="0.9"/></svg>
<div class="a" style="left:483.0px;top:227.3px;width:150.70px;height:0.60px;background:#262626;"></div>
<svg class="a" style="left:487px;top:232.50px" width="4" height="3" viewBox="0 0 4 3"><path d="M0 0h4l-2 2.6z" fill="#888"/></svg>
<div class="t" style="left:492px;top:230px;font-size:7.20px;line-height:7.20px;color:#8e8e8e;transform:translate(0.10px,0.63px) scaleX(0.8929);">Application Settings</div>
<div class="t" style="left:492px;top:241px;font-size:7.06px;line-height:7.06px;color:#8e8e8e;transform:translate(0.50px,0.90px) scaleX(0.8929);">System Language</div>
<div class="a" style="left:560.7px;top:241.1px;width:70.90px;height:8.50px;background:#3a3a3a;border-radius:1.5px;"></div>
<div class="t" style="left:562px;top:241px;font-size:7.06px;line-height:7.06px;color:#a8a8a8;transform:translate(0.50px,0.90px) scaleX(0.8929);">English</div>
<svg class="a" style="left:626px;top:243.80px" width="4" height="3" viewBox="0 0 4 3"><path d="M0 0h4l-2 2.6z" fill="#bbb"/></svg>
<div class="t" style="left:492px;top:252px;font-size:7.06px;line-height:7.06px;color:#8e8e8e;transform:translate(0.50px,0.80px) scaleX(0.8929);">Internet Reachability</div>
<div class="a" style="left:560.7px;top:252.4px;width:70.90px;height:8.00px;background:#3a3a3a;border-radius:1.5px;"></div>
<div class="t" style="left:562px;top:252px;font-size:7.06px;line-height:7.06px;color:#a8a8a8;transform:translate(0.50px,0.90px) scaleX(0.8929);">Not Reachable</div>
<svg class="a" style="left:626px;top:254.80px" width="4" height="3" viewBox="0 0 4 3"><path d="M0 0h4l-2 2.6z" fill="#bbb"/></svg>
<div class="a" style="left:492.6px;top:263.2px;width:139.00px;height:8.30px;background:#3a3a3a;border-radius:1.5px;"></div>
<div class="t" style="left:492.6px;top:264.5px;width:139px;text-align:center;font-size:6.3px;line-height:6.3px;color:#777">On Low Memory</div>
<div class="a" style="left:483.0px;top:274px;width:150.70px;height:0.60px;background:#262626;"></div>
<div class="a" style="left:634.5px;top:68.9px;width:361.50px;height:10.20px;background:#2c2c2c;"></div>
<div class="a" style="left:634.5px;top:79.1px;width:361.50px;height:0.60px;background:#232323;"></div>
<svg class="a" style="left:636px;top:70.5px" width="5" height="7" viewBox="0 0 5 7"><path d="M3.8 0.6 L1 3.5 L3.8 6.4" fill="none" stroke="#888" stroke-width="0.8"/></svg>
<div class="a" style="left:642px;top:69px;width:0.60px;height:10.00px;background:#1f1f1f;"></div>
<div class="t" style="left:644px;top:70px;font-size:7.02px;line-height:7.02px;color:#8a8a8a;transform:translate(0.60px,0.62px) scaleX(0.8929);">Scale</div>
<div class="a" style="left:665.4px;top:73.8px;width:49.40px;height:0.70px;background:#4a4a4a;"></div>
<div class="a" style="left:678px;top:72px;width:4.6px;height:4.6px;border-radius:50%;background:#8e8e8e"></div>
<div class="t" style="left:717px;top:71px;font-size:7.17px;line-height:7.17px;color:#8a8a8a;transform:translate(0.60px,0.15px) scaleX(0.8929);">35</div>
<div class="a" style="left:731.8px;top:69.4px;width:41.90px;height:9.10px;background:#383838;"></div>
<div class="t" style="left:734px;top:71px;font-size:7.09px;line-height:7.09px;color:#727272;transform:translate(0.60px,0.08px) scaleX(0.8929);">Fit to Screen</div>
<div class="t" style="left:776px;top:71px;font-size:6.88px;line-height:6.88px;color:#727272;transform:translate(0.90px,0.19px) scaleX(0.8929);">Rotate</div>
<svg class="a" style="left:798.5px;top:70px" width="18" height="8" viewBox="0 0 18 8"><g fill="none" stroke="#9a9a9a" stroke-width="0.75"><path d="M4 1.1 A2.9 2.9 0 1 1 1.3 3"/><path d="M13.5 1.1 A2.9 2.9 0 1 0 16.2 3"/><path d="M4 4 L5.6 4 M4 4 L4 2.4" stroke-width="0.6"/><path d="M13.5 4 L11.9 4 M13.5 4 L13.5 2.4" stroke-width="0.6"/></g><path d="M0.6 1.5 L2.8 1.5 L1.7 3.6z M16.9 1.5 L14.7 1.5 L15.8 3.6z" fill="#9a9a9a"/></svg>
<div class="a" style="left:816.9px;top:69.4px;width:34.00px;height:9.10px;background:#383838;"></div>
<div class="t" style="left:819px;top:71px;font-size:7.11px;line-height:7.11px;color:#727272;transform:translate(0.70px,0.07px) scaleX(0.8929);">Safe Area</div>
<div class="a" style="left:706.2px;top:85.2px;width:217.4px;height:448.3px;border-radius:25px;background:#1c1c1c;border:1px solid #d0d0d0"></div>
<svg class="a" style="left:714.8px;top:94.8px" width="199.8" height="429.4" viewBox="0 0 199 429.4" preserveAspectRatio="none">
<defs>
<linearGradient id="sky" x1="0" y1="0" x2="0" y2="1">
<stop offset="0" stop-color="#586c90"/>
<stop offset="0.054" stop-color="#5b6f94"/>
<stop offset="0.245" stop-color="#7190b8"/>
<stop offset="0.385" stop-color="#9ab9df"/>
<stop offset="0.443" stop-color="#c5e6fb"/>
<stop offset="0.478" stop-color="#e5fdff"/>
<stop offset="0.505" stop-color="#f2fff8"/>
<stop offset="0.521" stop-color="#d3ded5"/>
<stop offset="0.530" stop-color="#a3a8a3"/>
<stop offset="0.540" stop-color="#6e6965"/>
<stop offset="1" stop-color="#6a645f"/>
</linearGradient>
<clipPath id="scr"><path d="M0 19 A19 19 0 0 1 19 0 H41.4 Q42.9 0 42.9 1.5 V5.4 A10 10 0 0 0 52.9 15.4 H144.5 A10 10 0 0 0 154.5 5.4 V1.5 Q154.5 0 156 0 H180 A19 19 0 0 1 199 19 V410.4 A19 19 0 0 1 180 429.4 H19 A19 19 0 0 1 0 410.4 Z"/></clipPath>
</defs>
<rect width="199" height="429.4" fill="url(#sky)" clip-path="url(#scr)"/>
<path d="M0 23.2 H199 V411.8 H0 Z M1.6 24.5 V410.4 H197.4 V24.5 Z" fill="#3ccc3c" fill-rule="evenodd"/>
<rect x="1.4" y="24.6" width="17" height="16.6" fill="#fff"/>
<rect x="180.4" y="24.6" width="17" height="16.6" fill="#fff"/>
<rect x="1.4" y="393.5" width="17" height="16.6" fill="#fff"/>
<rect x="180.4" y="393.5" width="17" height="16.6" fill="#fff"/>
</svg>
<div class="a" style="left:28px;top:409.4px;width:276.00px;height:10.20px;background:#262626;"></div>
<div class="a" style="left:28px;top:503.1px;width:276.00px;height:0.70px;background:#262626;"></div>
<div class="a" style="left:28.5px;top:409.8px;width:27.50px;height:9.60px;background:#2c2c2c;"></div>
<div class="a" style="left:56.8px;top:409.8px;width:29.40px;height:9.60px;background:#2c2c2c;"></div>
<div class="a" style="left:87.25px;top:409.8px;width:35.15px;height:9.60px;background:#2c2c2c;"></div>
<div class="a" style="left:123.8px;top:409.8px;width:25.90px;height:9.60px;background:#2c2c2c;"></div>
<div class="t" style="left:30px;top:411px;font-size:7.06px;line-height:7.06px;color:#8f8f8f;transform:translate(0.10px,0.40px) scaleX(0.8929);">Clear</div>
<div class="a" style="left:48.8px;top:410px;width:0.60px;height:9.00px;background:#222;"></div>
<svg class="a" style="left:51.5px;top:413.00px" width="4" height="3" viewBox="0 0 4 3"><path d="M0 0h4l-2 2.6z" fill="#aaa"/></svg>
<div class="t" style="left:58px;top:411px;font-size:6.88px;line-height:6.88px;color:#8f8f8f;transform:translate(0.80px,0.69px) scaleX(0.8929);">Collapse</div>
<div class="t" style="left:88px;top:412px;font-size:6.65px;line-height:6.65px;color:#8f8f8f;transform:translate(0.90px,0.19px) scaleX(0.8929);">Error Pause</div>
<div class="t" style="left:125px;top:411px;font-size:6.83px;line-height:6.83px;color:#8f8f8f;transform:translate(0.80px,0.51px) scaleX(0.8929);">Editor</div>
<svg class="a" style="left:144px;top:413.00px" width="4" height="3" viewBox="0 0 4 3"><path d="M0 0h4l-2 2.6z" fill="#aaa"/></svg>
<div class="a" style="left:151.1px;top:411.1px;width:99.40px;height:7.80px;background:#1c1c1c;border-radius:2px;"></div>
<div class="a" style="left:252.8px;top:409.8px;width:16.40px;height:9.80px;background:#393939;"></div>
<div class="a" style="left:270px;top:409.8px;width:16.00px;height:9.80px;background:#393939;"></div>
<div class="a" style="left:287.2px;top:409.8px;width:15.80px;height:9.80px;background:#393939;"></div>
<div class="t" style="left:264px;top:412px;font-size:6.72px;line-height:6.72px;color:#888;transform:translate(0.00px,0.26px) scaleX(0.8929);">0</div>
<div class="t" style="left:280px;top:412px;font-size:6.72px;line-height:6.72px;color:#888;transform:translate(0.50px,0.26px) scaleX(0.8929);">0</div>
<div class="t" style="left:297px;top:412px;font-size:6.72px;line-height:6.72px;color:#888;transform:translate(0.50px,0.26px) scaleX(0.8929);">0</div>
<svg class="a" style="left:254.5px;top:411.5px" width="48" height="7" viewBox="0 0 48 7"><circle cx="3.5" cy="3.3" r="2.9" fill="#8a8a8a"/><path d="M20.5 0.5 L23.8 6.3 H17.2 Z" fill="#777"/><circle cx="37" cy="3.3" r="3.1" fill="#d8d8d8"/><path d="M37 1.4v2.3" stroke="#353535" stroke-width="0.9"/><circle cx="37" cy="5" r="0.45" fill="#353535"/></svg>
<svg class="a" style="left:308.5px;top:50.3px" width="6" height="6" viewBox="0 0 6 6"><circle cx="3" cy="3" r="2.7" fill="#b8b8b8"/><path d="M3 2.6v2" stroke="#2b2b2b" stroke-width="0.8"/><circle cx="3" cy="1.6" r="0.45" fill="#2b2b2b"/></svg>
<svg class="a" style="left:463.4px;top:49.70px" width="6" height="7" viewBox="0 0 6 7"><path d="M1.3 3.2 V2 a1.7 1.7 0 0 1 3.4 0" fill="none" stroke="#a8a8a8" stroke-width="0.8"/><rect x="0.8" y="3.3" width="4.4" height="3.2" fill="#a8a8a8"/></svg>
<svg class="a" style="left:474.1px;top:49.70px" width="2" height="7" viewBox="0 0 2 7"><circle cx="1" cy="1" r="0.6" fill="#a8a8a8"/><circle cx="1" cy="3.5" r="0.6" fill="#a8a8a8"/><circle cx="1" cy="6" r="0.6" fill="#a8a8a8"/></svg>
<svg class="a" style="left:477px;top:36px" width="48" height="10" viewBox="0 0 48 10"><path d="M5.6 1.7 V7.3 L10.2 4.5z" fill="#e8e8e8"/><path d="M22.5 2 V7 M25.2 2 V7" stroke="#d0d0d0" stroke-width="1.2"/><path d="M37.5 2 V7 L41.6 4.5z" fill="#d0d0d0"/><path d="M42.5 2 V7" stroke="#d0d0d0" stroke-width="1.1"/></svg>
<svg class="a" style="left:420.5px;top:21.3px" width="7" height="9" viewBox="0 0 7 9"><path d="M0.4 0.4 H4.6 L6.6 2.4 V8.6 H0.4Z" fill="#9a9a9a"/><circle cx="3.6" cy="5.4" r="1.8" fill="none" stroke="#333" stroke-width="0.6"/></svg>
<svg class="a" style="left:487px;top:50.5px" width="6" height="6" viewBox="0 0 6 6"><rect x="0.5" y="0.8" width="5" height="3.6" fill="#a8a8a8"/><path d="M1.5 5.3h3" stroke="#a8a8a8" stroke-width="0.7"/></svg>
<svg class="a" style="left:526.2px;top:50.3px" width="6" height="6" viewBox="0 0 6 6"><rect x="0.3" y="0.5" width="5.4" height="1.4" fill="#b0b0b0"/><rect x="0.8" y="2.3" width="4.4" height="3.3" fill="#b0b0b0"/><path d="M2.2 3.2h1.6" stroke="#2b2b2b" stroke-width="0.6"/></svg>
<svg class="a" style="left:599px;top:50.3px" width="6" height="6" viewBox="0 0 6 6"><circle cx="3" cy="3" r="2.7" fill="#c8c8c8"/><rect x="2" y="1.4" width="2" height="3.2" rx="0.4" fill="#2b2b2b"/></svg>
<svg class="a" style="left:987.5px;top:49.4px" width="2" height="7" viewBox="0 0 2 7"><circle cx="1" cy="1" r="0.55" fill="#a8a8a8"/><circle cx="1" cy="3.3" r="0.55" fill="#a8a8a8"/><circle cx="1" cy="5.6" r="0.55" fill="#a8a8a8"/></svg>
<svg class="a" style="left:32px;top:401.5px" width="6" height="7" viewBox="0 0 6 7"><rect x="0.4" y="0.3" width="4.8" height="6.2" fill="#9a9a9a"/><path d="M1.2 2h3.2 M1.2 3.4h3.2 M1.2 4.8h2" stroke="#2b2b2b" stroke-width="0.5"/></svg>
<svg class="a" style="left:75.7px;top:401.6px" width="7" height="7" viewBox="0 0 7 7"><circle cx="3.3" cy="3.3" r="2.9" fill="#c0c0c0"/><path d="M3.3 1.4 V3.4 H4.8" stroke="#2b2b2b" stroke-width="0.6" fill="none"/></svg>
<svg class="a" style="left:125.6px;top:402px" width="7" height="6" viewBox="0 0 7 6"><path d="M0.5 1 L2.5 3 L0.5 5 M2.5 3 H6.5" fill="none" stroke="#b0b0b0" stroke-width="0.8"/><circle cx="5.8" cy="3" r="0.8" fill="#b0b0b0"/></svg>
<svg class="a" style="left:296.3px;top:401.5px" width="2" height="7" viewBox="0 0 2 7"><circle cx="1" cy="1" r="0.55" fill="#a8a8a8"/><circle cx="1" cy="3.3" r="0.55" fill="#a8a8a8"/><circle cx="1" cy="5.6" r="0.55" fill="#a8a8a8"/></svg>
<svg class="a" style="left:153px;top:412.50px" width="5" height="5" viewBox="0 0 5 5"><circle cx="2" cy="2" r="1.4" fill="none" stroke="#888" stroke-width="0.7"/><path d="M3 3 L4.6 4.6" stroke="#888" stroke-width="0.8"/></svg>
<svg class="a" style="left:810px;top:36.5px" width="10" height="9" viewBox="0 0 10 9"><path d="M5 1 V8 M2 2.5 L8 6.5 M8 2.5 L2 6.5" stroke="#777" stroke-width="0.6"/></svg>
<svg class="a" style="left:830.5px;top:37px" width="10" height="8" viewBox="0 0 10 8"><path d="M2.2 6.2 a1.7 1.7 0 0 1 0 -3.2 a2.6 2.6 0 0 1 5 -0.6 a1.9 1.9 0 0 1 0.7 3.8z" fill="#d8d8d8"/></svg>
<svg class="a" style="left:881px;top:39.50px" width="4" height="3" viewBox="0 0 4 3"><path d="M0 0h4l-2 2.9z" fill="#c8c8c8"/></svg>
<svg class="a" style="left:925.5px;top:39.50px" width="4" height="3" viewBox="0 0 4 3"><path d="M0 0h4l-2 2.9z" fill="#c8c8c8"/></svg>
<svg class="a" style="left:984.5px;top:39.50px" width="4" height="3" viewBox="0 0 4 3"><path d="M0 0h4l-2 2.9z" fill="#c8c8c8"/></svg>
<svg class="a" style="left:797px;top:39.50px" width="4" height="3" viewBox="0 0 4 3"><path d="M0 0h4l-2 2.9z" fill="#dca727"/></svg>
<div class="a" style="left:28px;top:539.8px;width:968px;height:10.7px;background:#1a1a1a;border-radius:0 0 6px 6px"></div>
<div class="a" style="left:28px;top:19px;width:968px;height:531.5px;border-radius:6px;border:1.2px solid rgba(255,255,255,0.085)"></div>
<svg class="a" style="left:942px;top:540.5px" width="52" height="9" viewBox="0 0 52 9"><g fill="none" stroke="#a8a8a8" stroke-width="0.8"><path d="M4 1.5 q3 0 5 3 q-1 3 -4 3.5 q-2 -3 -1 -6.5z M3 1.5 L10 8"/><ellipse cx="20" cy="2.6" rx="3" ry="1.2"/><path d="M17 2.6 V6.2 a3 1.2 0 0 0 6 0 V2.6 M17 5 L23 7.6"/><path d="M31 2.5 h5 v4 h-5z M30 1 L37 8"/></g><circle cx="46.8" cy="4.5" r="3.2" fill="none" stroke="#a8a8a8" stroke-width="0.7"/><path d="M45.3 4.5 L46.4 5.6 L48.4 3.4" fill="none" stroke="#a8a8a8" stroke-width="0.7"/><path d="M0.7 0.5 V8.5 M14 0.5 V8.5 M27.2 0.5 V8.5 M40.5 0.5 V8.5" stroke="#222" stroke-width="0.6"/></svg>
</div></body></html>
